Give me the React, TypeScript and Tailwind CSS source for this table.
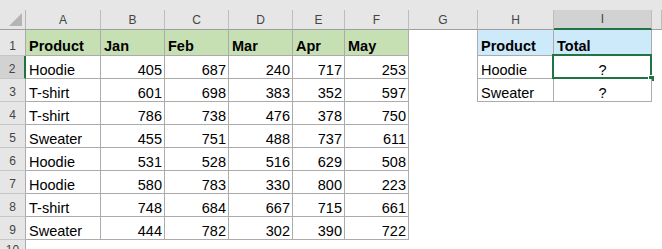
const font = { fontFamily: '"Liberation Sans", Arial, sans-serif' };

const columns = ["A", "B", "C", "D", "E", "F", "G", "H", "I", ""];

const rows: [string, number, number, number, number, number][] = [
  ["Hoodie", 405, 687, 240, 717, 253],
  ["T-shirt", 601, 698, 383, 352, 597],
  ["T-shirt", 786, 738, 476, 378, 750],
  ["Sweater", 455, 751, 488, 737, 611],
  ["Hoodie", 531, 528, 516, 629, 508],
  ["Hoodie", 580, 783, 330, 800, 223],
  ["T-shirt", 748, 684, 667, 715, 661],
  ["Sweater", 444, 782, 302, 390, 722],
];

const lookup: Record<number, [string, string]> = {
  1: ["Hoodie", "?"],
  2: ["Sweater", "?"],
};

function RowHead({ n, active }: { n: number; active?: boolean }) {
  return (
    <div
      className={
        "flex items-end justify-center pb-[2px] text-[12px] leading-[14px] text-[#444] border-b border-[#c6c6c6] " +
        (active
          ? "bg-[#d2d2d2] border-r-2 border-r-[#217346]"
          : "bg-[#e6e6e6] border-r border-r-[#ababab]")
      }
    >
      {n}
    </div>
  );
}

function Cell({
  children,
  align = "left",
  bold,
  bg,
  boxed,
  overlay,
}: {
  children?: React.ReactNode;
  align?: "left" | "right" | "center";
  bold?: boolean;
  bg?: string;
  boxed?: boolean;
  overlay?: React.ReactNode;
}) {
  const justify =
    align === "right" ? "justify-end pr-[2px]" : align === "center" ? "justify-center" : "justify-start pl-[3px]";
  return (
    <div
      className={
        "relative flex items-end text-[14.5px] leading-[16px] text-black whitespace-nowrap " +
        justify +
        (bold ? " font-bold pb-[1px]" : "") +
        (boxed ? " border-r border-b border-[#ababab]" : "") +
        (bg ? " " + bg : " bg-white")
      }
    >
      {children}
      {overlay}
    </div>
  );
}

export default function App() {
  return (
    <div className="w-[662px] h-[249px] overflow-hidden bg-white" style={font}>
      <div
        className="grid"
        style={{
          gridTemplateColumns: "26px 75px 64px 64px 64px 52px 64px 69px 76px 98px 1fr",
          gridTemplateRows: "10px 20px 26px repeat(8, 23px) 20px",
        }}
      >
        <div className="col-span-11 bg-[#e6e6e6]" />

        {/* column headers */}
        <div className="relative bg-[#e6e6e6] border-r border-b border-r-[#b4b4b4] border-b-[#9e9e9e]">
          <svg className="absolute left-[9px] top-[3px]" width="14" height="14" viewBox="0 0 14 14">
            <polygon points="13,0 13,13 0,13" fill="#b4b4b4" />
          </svg>
        </div>
        {columns.map((c, i) => (
          <div
            key={i}
            className={
              "flex items-center justify-center text-[12px] leading-[14px] text-[#444] border-r border-r-[#bdbdbd] " +
              (c === "I"
                ? "bg-[#d2d2d2] border-b-2 border-b-[#217346]"
                : "bg-[#e6e6e6] border-b border-b-[#9e9e9e]")
            }
          >
            {c}
          </div>
        ))}

        {/* row 1 */}
        <RowHead n={1} />
        {["Product", "Jan", "Feb", "Mar", "Apr", "May"].map((h) => (
          <Cell key={h} bold boxed bg="bg-[#c6e0b4]">
            {h}
          </Cell>
        ))}
        <div className="bg-white border-r border-[#ababab]" />
        <Cell bold boxed bg="bg-[#cdeafb]">
          Product
        </Cell>
        <Cell bold boxed bg="bg-[#cdeafb]">
          Total
        </Cell>
        <div />

        {/* rows 2-9 */}
        {rows.map((r, i) => (
          <div key={i} className="contents">
            <RowHead n={i + 2} active={i === 0} />
            <Cell boxed>{r[0]}</Cell>
            {r.slice(1).map((v, j) => (
              <Cell key={j} boxed align="right">
                {v}
              </Cell>
            ))}
            {lookup[i + 1] ? (
              <>
                <div className="bg-white border-r border-[#ababab]" />
                <Cell boxed>{lookup[i + 1][0]}</Cell>
                <Cell
                  boxed
                  align="center"
                  overlay={
                    i === 0 && (
                      <>
                        <div className="absolute -left-[2px] -top-[2px] w-[100px] h-[25px] border-2 border-[#217346]" />
                        <div className="absolute left-[94px] top-[19px] w-[7px] h-[7px] bg-[#217346] border border-white" />
                      </>
                    )
                  }
                >
                  {lookup[i + 1][1]}
                </Cell>
                <div />
              </>
            ) : (
              <>
                <div />
                <div />
                <div />
                <div />
              </>
            )}
          </div>
        ))}

        {/* row 10 */}
        <RowHead n={10} />
        <div className="col-span-10" />
      </div>
    </div>
  );
}
